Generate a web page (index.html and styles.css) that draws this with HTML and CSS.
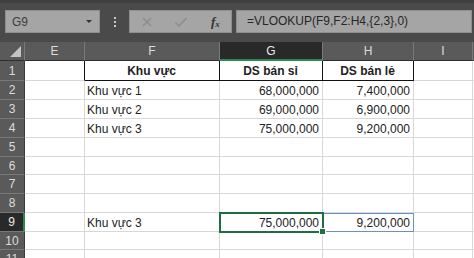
FILE: index.html
```html
<!DOCTYPE html>
<html>
<head>
  <title>Bảng tính</title>
  <meta name="viewport" content="width=device-width, initial-scale=1">
  <link rel="stylesheet" href="styles.css">
</head>
<body>
  <div class="app">
    <div class="toolbar">
      <div class="name-box">
        <span>G9</span>
        <span class="caret"></span>
      </div>
      <div class="dots"><i></i><i></i><i></i></div>
      <div class="fx-box">
        <svg width="12" height="12" viewBox="0 0 12 12"><path d="M2 2 L10 10 M10 2 L2 10" stroke="#8b8b8b" stroke-width="1.3" fill="none"/></svg>
        <svg width="14" height="12" viewBox="0 0 14 12"><path d="M1.5 6.5 L5 10 L12.5 2" stroke="#8b8b8b" stroke-width="1.4" fill="none"/></svg>
        <span class="fx">f<sub>x</sub></span>
      </div>
      <div class="formula">=VLOOKUP(F9,F2:H4,{2,3},0)</div>
    </div>

    <div class="sheet">
      <!-- tiêu đề cột -->
      <div class="hd corner"><span class="tri"></span></div>
      <div class="hd">E</div>
      <div class="hd">F</div>
      <div class="hd sel-col">G</div>
      <div class="hd">H</div>
      <div class="hd">I</div>
      <div class="hd last"></div>

      <!-- dòng 1 -->
      <div class="rh">1</div>
      <div class="c edge-r"></div>
      <div class="c title">Khu vực</div>
      <div class="c title">DS bán sỉ</div>
      <div class="c title">DS bán lẻ</div>
      <div class="c"></div>
      <div class="c last"></div>

      <!-- dòng 2 -->
      <div class="rh">2</div>
      <div class="c"></div>
      <div class="c">Khu vực 1</div>
      <div class="c num">68,000,000</div>
      <div class="c num">7,400,000</div>
      <div class="c"></div>
      <div class="c last"></div>

      <!-- dòng 3 -->
      <div class="rh">3</div>
      <div class="c"></div>
      <div class="c">Khu vực 2</div>
      <div class="c num">69,000,000</div>
      <div class="c num">6,900,000</div>
      <div class="c"></div>
      <div class="c last"></div>

      <!-- dòng 4 -->
      <div class="rh">4</div>
      <div class="c"></div>
      <div class="c">Khu vực 3</div>
      <div class="c num">75,000,000</div>
      <div class="c num">9,200,000</div>
      <div class="c"></div>
      <div class="c last"></div>

      <div class="rh">5</div>
      <div class="c"></div><div class="c"></div><div class="c"></div><div class="c"></div><div class="c"></div><div class="c last"></div>

      <div class="rh">6</div>
      <div class="c"></div><div class="c"></div><div class="c"></div><div class="c"></div><div class="c"></div><div class="c last"></div>

      <div class="rh">7</div>
      <div class="c"></div><div class="c"></div><div class="c"></div><div class="c"></div><div class="c"></div><div class="c last"></div>

      <div class="rh">8</div>
      <div class="c"></div><div class="c"></div><div class="c"></div><div class="c"></div><div class="c"></div><div class="c last"></div>

      <!-- dòng 9: ô đang chọn -->
      <div class="rh sel-row">9</div>
      <div class="c"></div>
      <div class="c">Khu vực 3</div>
      <div class="c num active">75,000,000</div>
      <div class="c num spill">9,200,000</div>
      <div class="c"></div>
      <div class="c last"></div>

      <div class="rh">10</div>
      <div class="c"></div><div class="c"></div><div class="c"></div><div class="c"></div><div class="c"></div><div class="c last"></div>

      <div class="rh">11</div>
      <div class="c"></div><div class="c"></div><div class="c"></div><div class="c"></div><div class="c"></div><div class="c last"></div>
    </div>
  </div>
</body>
</html>
```

FILE: styles.css
```css
body {
  margin: 0;
  background: #ffffff;
  font-family: "Liberation Sans", Arial, sans-serif;
}

.app {
  width: 474px;
  height: 258px;
  overflow: hidden;
}

/* Thanh công thức */
.toolbar {
  height: 42px;
  box-sizing: border-box;
  padding-top: 10px;
  background: #4a4a4a;
  border-top: 3px solid #3f3f3f;
  padding-top: 7px;
  display: flex;
  align-items: flex-start;
}

.name-box {
  margin-left: 5px;
  width: 95px;
  height: 23px;
  box-sizing: border-box;
  background: #a5a5a5;
  border: 1px solid #8e8e8e;
  display: flex;
  align-items: center;
  justify-content: space-between;
  padding: 0 7px 0 6px;
  font-size: 12px;
  color: #3b3b3b;
}

.caret {
  width: 0;
  height: 0;
  border-left: 3px solid transparent;
  border-right: 3px solid transparent;
  border-top: 3px solid #333;
}

.dots {
  width: 29px;
  height: 23px;
  display: flex;
  flex-direction: column;
  align-items: center;
  justify-content: center;
  gap: 2px;
}

.dots i {
  display: block;
  width: 2px;
  height: 2px;
  background: #c8c8c8;
}

.fx-box {
  width: 103px;
  height: 23px;
  box-sizing: border-box;
  background: #a5a5a5;
  border: 1px solid #8e8e8e;
  display: flex;
  align-items: center;
  padding-left: 11px;
  gap: 21px;
}

.fx {
  font-family: "Liberation Serif", serif;
  font-style: italic;
  font-weight: bold;
  font-size: 13px;
  color: #333;
  margin-left: 2px;
}

.fx sub {
  font-size: 9px;
  vertical-align: -1px;
}

.formula {
  margin-left: 4px;
  width: 236px;
  height: 23px;
  box-sizing: border-box;
  background: #a5a5a5;
  border: 1px solid #8e8e8e;
  padding-left: 10px;
  font-size: 12px;
  line-height: 21px;
  color: #262626;
  white-space: nowrap;
}

/* Lưới bảng tính */
.sheet {
  display: grid;
  grid-template-columns: 25px 60px 135px 103px 91px 59px 1fr;
  grid-template-rows: 19px 20px 19px 19px 19px 19px 18px 19px 19px 19px 18px 19px;
  font-size: 12px;
  color: #222;
}

.hd {
  box-sizing: border-box;
  background: #5a5a5a;
  color: #dcdcdc;
  border-right: 1px solid #7a7a7a;
  border-bottom: 1px solid #2e2e2e;
  display: flex;
  align-items: center;
  justify-content: center;
  font-size: 12px;
}

.corner {
  position: relative;
}

.tri {
  position: absolute;
  right: 3px;
  bottom: 3px;
  width: 0;
  height: 0;
  border-left: 11px solid transparent;
  border-bottom: 11px solid #c4c4c4;
}

.sel-col {
  background: #292929;
  color: #e8e8e8;
  border-bottom: 2px solid #2a8a52;
}

.rh {
  box-sizing: border-box;
  background: #5a5a5a;
  color: #dcdcdc;
  border-right: 1px solid #3a3a3a;
  border-bottom: 1px solid #797979;
  display: flex;
  align-items: center;
  justify-content: center;
  font-size: 12px;
}

.sel-row {
  background: #292929;
  color: #e8e8e8;
  border-right: 2px solid #2a8a52;
}

.c {
  box-sizing: border-box;
  border-right: 1px solid #d8d8d8;
  border-bottom: 1px solid #d8d8d8;
  padding: 1px 3px 0 2px;
  display: flex;
  align-items: center;
  white-space: nowrap;
}

.last {
  border-right: none;
}

.num {
  justify-content: flex-end;
}

.edge-r {
  border-right-color: #111;
}

.title {
  font-weight: bold;
  justify-content: center;
  border-right-color: #111;
  border-bottom-color: #111;
}

/* ô G9 đang chọn và vùng tràn G9:H9 */
.active {
  position: relative;
  outline: 2px solid #1f6e41;
  outline-offset: -1px;
}

.active::after {
  content: "";
  position: absolute;
  right: -4px;
  bottom: -4px;
  width: 5px;
  height: 5px;
  background: #1f6e41;
  border: 1px solid #fff;
  z-index: 2;
}

.spill {
  outline: 1px solid #6b8fd1;
  outline-offset: -1px;
}
```
